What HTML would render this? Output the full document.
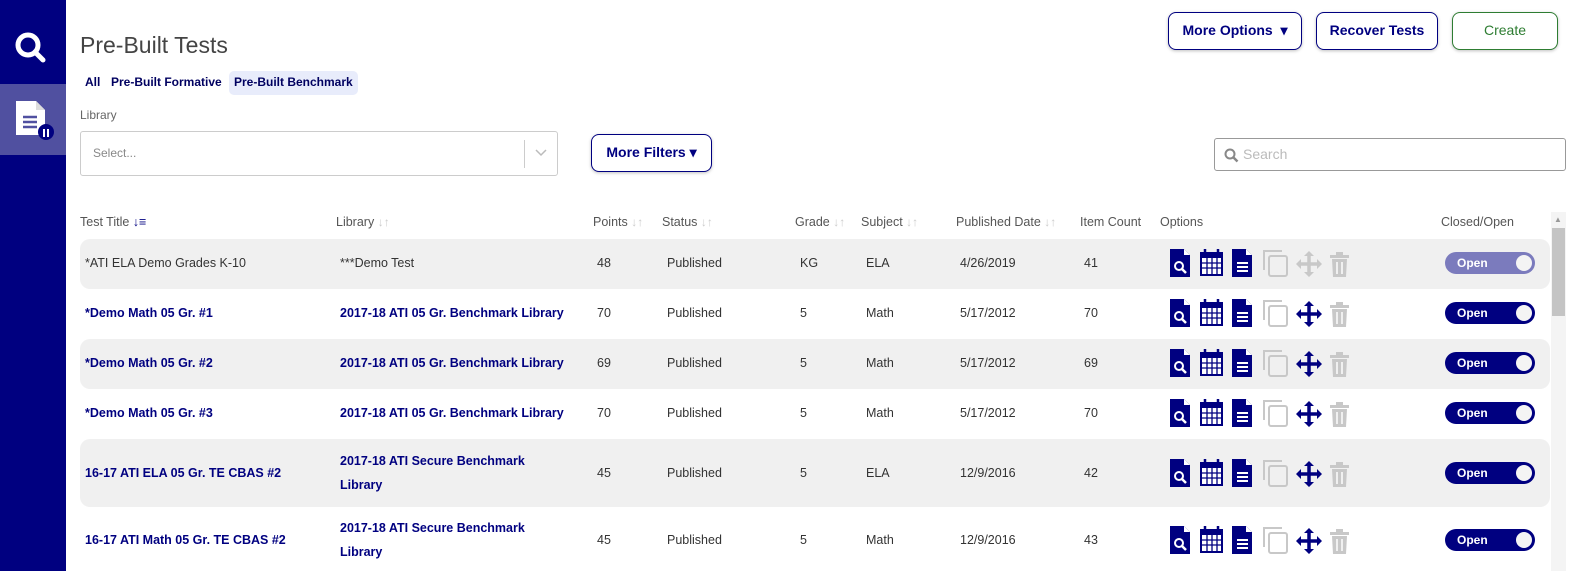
<!DOCTYPE html>
<html><head><meta charset="utf-8"><style>
*{box-sizing:border-box;margin:0;padding:0}
body{width:1583px;height:571px;overflow:hidden;background:#fff;font-family:"Liberation Sans",Arial,sans-serif;position:relative;color:#333}
.side{position:absolute;left:0;top:0;width:66px;height:571px;background:#000080}
.side .act{position:absolute;left:0;top:84px;width:66px;height:71px;background:#5050a0}
.abs{position:absolute}
h1{position:absolute;left:80px;top:32px;font-size:23px;font-weight:normal;color:#444}
.tab{position:absolute;top:71px;height:24px;line-height:22px;font-size:12px;font-weight:bold;color:#000060;padding:0 5px}
.btn{position:absolute;top:12px;height:38px;border:1.5px solid #000080;border-radius:8px;font-size:14px;font-weight:bold;color:#000080;text-align:center;line-height:35px;box-shadow:0 1px 3px rgba(0,0,0,.25);background:#fff}
.row{position:absolute;left:80px;width:1470px;border-radius:10px}
.g{background:#f0f0f0}
.c{position:absolute;font-size:12.5px;color:#333;transform:translateY(-50%)}
.n{color:#000080;font-weight:bold}
.h{position:absolute;top:215px;font-size:12.5px;color:#555}
.h i{color:#ccc;font-style:normal;font-size:12px}
.tg{position:absolute;left:1445px;width:90px;height:22px;border-radius:11px;background:#000080;color:#fff;font-size:12px;font-weight:bold;line-height:22px;padding-left:12px;transform:translateY(-50%)}
.tg:after{content:"";position:absolute;right:3px;top:3px;width:16px;height:16px;border-radius:50%;background:#f4f4f4}
.ic{position:absolute;left:1170px;transform:translateY(-50%)}
</style></head><body>
<div class="side"><div class="act"></div>
<svg class="abs" style="left:13px;top:30px" width="36" height="36" viewBox="0 0 36 36"><circle cx="15" cy="15" r="10" fill="none" stroke="#fff" stroke-width="5"/><path d="M22 22l8 8" stroke="#fff" stroke-width="5" stroke-linecap="round"/></svg>
<svg class="abs" style="left:15px;top:100px" width="40" height="42" viewBox="0 0 40 42"><path d="M1 1h20l9 9v25H1z" fill="#fff"/><path d="M21 1v9h9" fill="#ddd"/><path d="M8 17h14M8 22h14M8 27h14" stroke="#5050a0" stroke-width="2.5"/><circle cx="31" cy="32" r="8" fill="#000080"/><path d="M29 29v8M33 29v8" stroke="#fff" stroke-width="2"/></svg>
</div>
<h1>Pre-Built Tests</h1>
<div class="tab" style="left:80px">All</div>
<div class="tab" style="left:106px">Pre-Built Formative</div>
<div class="tab" style="left:229px;background:#e8ecfb;border-radius:5px">Pre-Built Benchmark</div>
<div class="abs" style="left:80px;top:108px;font-size:12px;color:#666">Library</div>
<div class="abs" style="left:80px;top:131px;width:478px;height:45px;border:1px solid #ccc;border-radius:3px"><span class="abs" style="left:12px;top:14px;font-size:12px;color:#888">Select...</span><span class="abs" style="left:443px;top:8px;width:1px;height:28px;background:#ccc"></span><svg class="abs" style="left:453px;top:16px" width="14" height="10"><path d="M2 2l5 5 5-5" fill="none" stroke="#bbb" stroke-width="1.5"/></svg></div>
<div class="btn" style="left:591px;top:134px;width:121px">More Filters ▾</div>
<div class="abs" style="left:1214px;top:138px;width:352px;height:33px;border:1px solid #999;border-radius:3px"><svg class="abs" style="left:9px;top:9px" width="15" height="15"><circle cx="6" cy="6" r="4.5" fill="none" stroke="#888" stroke-width="2"/><path d="M9.5 9.5l4 4" stroke="#888" stroke-width="2.5"/></svg><span class="abs" style="left:28px;top:7px;font-size:14px;color:#bbb">Search</span></div>
<div class="btn" style="left:1168px;width:134px">More Options &nbsp;▾</div>
<div class="btn" style="left:1316px;width:122px">Recover Tests</div>
<div class="btn" style="left:1452px;width:106px;border-color:#2e7d32;color:#2e7d32;font-weight:normal">Create</div>
<div class="h" style="left:80px">Test Title <b style="color:#000080">↓≡</b></div>
<div class="h" style="left:336px">Library <i>↓↑</i></div>
<div class="h" style="left:593px">Points <i>↓↑</i></div>
<div class="h" style="left:662px">Status <i>↓↑</i></div>
<div class="h" style="left:795px">Grade <i>↓↑</i></div>
<div class="h" style="left:861px">Subject <i>↓↑</i></div>
<div class="h" style="left:956px">Published Date <i>↓↑</i></div>
<div class="h" style="left:1080px">Item Count</div>
<div class="h" style="left:1160px">Options</div>
<div class="h" style="left:1441px">Closed/Open</div>
<div class="abs" style="left:1551px;top:212px;width:15px;height:359px;background:#f4f4f4"><div class="abs" style="left:1px;top:16px;width:13px;height:88px;background:#c4c4c4"></div><div class="abs" style="left:3px;top:3px;font-size:8px;color:#999">▲</div></div>
<div class="row g" style="top:239px;height:50px"></div>
<div class="row g" style="top:339px;height:50px"></div>
<div class="row g" style="top:439px;height:68px"></div>
<svg width="0" height="0" style="position:absolute"><defs>
<g id="ico">
<path d="M0 0h14l6 6v22H0z" fill="#000080"/><path d="M14 0v6h6" fill="#fff"/><circle cx="9" cy="17" r="4" fill="none" stroke="#fff" stroke-width="2"/><path d="M12 20l4 4" stroke="#fff" stroke-width="2.5"/>
<g transform="translate(30,0)"><rect x="0" y="3" width="23" height="24" fill="#000080"/><rect x="2" y="9" width="19" height="16" fill="#fff"/><path d="M7 9v16M12 9v16M17 9v16M2 14h19M2 19h19" stroke="#000080" stroke-width="1.3"/><path d="M5 0v6M18 0v6" stroke="#000080" stroke-width="2.5"/></g>
<g transform="translate(62,0)"><path d="M0 0h14l6 6v22H0z" fill="#000080"/><path d="M14 0v6h6" fill="#fff"/><path d="M5 14h11M5 18h11M5 22h11" stroke="#fff" stroke-width="2"/></g>
<g transform="translate(93,1)" fill="none" stroke="#c8c8c8" stroke-width="2"><path d="M1 20V1h18"/><rect x="6" y="6" width="18" height="20" rx="2"/></g>
<g transform="translate(139,15)" fill="currentColor"><path d="M0 -9V9M-9 0H9" stroke="currentColor" stroke-width="3.5"/><path d="M-5 -8L0 -13L5 -8zM-5 8L0 13L5 8zM-8 -5L-13 0L-8 5zM8 -5L13 0L8 5z"/></g>
<g transform="translate(160,3)" fill="#c8c8c8"><rect x="0" y="3" width="19" height="3"/><rect x="6" y="0" width="7" height="3"/><path d="M2 7h15l-1 18H3z"/><path d="M7 10v12M12 10v12" stroke="#f0f0f0" stroke-width="2"/></g>
</g></defs></svg>
<div class="c" style="left:85px;top:263px">*ATI ELA Demo Grades K-10</div><div class="c" style="left:340px;top:263px">***Demo Test</div>
<div class="c" style="left:597px;top:263px">48</div><div class="c" style="left:667px;top:263px">Published</div><div class="c" style="left:800px;top:263px">KG</div><div class="c" style="left:866px;top:263px">ELA</div><div class="c" style="left:960px;top:263px">4/26/2019</div><div class="c" style="left:1084px;top:263px">41</div>
<svg class="ic" style="top:263px;color:#c8c8c8" width="190" height="36" viewBox="0 -4 190 36"><use href="#ico"/></svg>
<div class="tg" style="top:263px;background:#7b7bbd">Open</div>
<div class="c n" style="left:85px;top:313px">*Demo Math 05 Gr. #1</div><div class="c n" style="left:340px;top:313px">2017-18 ATI 05 Gr. Benchmark Library</div>
<div class="c" style="left:597px;top:313px">70</div><div class="c" style="left:667px;top:313px">Published</div><div class="c" style="left:800px;top:313px">5</div><div class="c" style="left:866px;top:313px">Math</div><div class="c" style="left:960px;top:313px">5/17/2012</div><div class="c" style="left:1084px;top:313px">70</div>
<svg class="ic" style="top:313px;color:#000080" width="190" height="36" viewBox="0 -4 190 36"><use href="#ico"/></svg>
<div class="tg" style="top:313px">Open</div>
<div class="c n" style="left:85px;top:363px">*Demo Math 05 Gr. #2</div><div class="c n" style="left:340px;top:363px">2017-18 ATI 05 Gr. Benchmark Library</div>
<div class="c" style="left:597px;top:363px">69</div><div class="c" style="left:667px;top:363px">Published</div><div class="c" style="left:800px;top:363px">5</div><div class="c" style="left:866px;top:363px">Math</div><div class="c" style="left:960px;top:363px">5/17/2012</div><div class="c" style="left:1084px;top:363px">69</div>
<svg class="ic" style="top:363px;color:#000080" width="190" height="36" viewBox="0 -4 190 36"><use href="#ico"/></svg>
<div class="tg" style="top:363px">Open</div>
<div class="c n" style="left:85px;top:413px">*Demo Math 05 Gr. #3</div><div class="c n" style="left:340px;top:413px">2017-18 ATI 05 Gr. Benchmark Library</div>
<div class="c" style="left:597px;top:413px">70</div><div class="c" style="left:667px;top:413px">Published</div><div class="c" style="left:800px;top:413px">5</div><div class="c" style="left:866px;top:413px">Math</div><div class="c" style="left:960px;top:413px">5/17/2012</div><div class="c" style="left:1084px;top:413px">70</div>
<svg class="ic" style="top:413px;color:#000080" width="190" height="36" viewBox="0 -4 190 36"><use href="#ico"/></svg>
<div class="tg" style="top:413px">Open</div>
<div class="c n" style="left:85px;top:473px">16-17 ATI ELA 05 Gr. TE CBAS #2</div><div class="c n" style="left:340px;top:473px;line-height:24px">2017-18 ATI Secure Benchmark<br>Library</div>
<div class="c" style="left:597px;top:473px">45</div><div class="c" style="left:667px;top:473px">Published</div><div class="c" style="left:800px;top:473px">5</div><div class="c" style="left:866px;top:473px">ELA</div><div class="c" style="left:960px;top:473px">12/9/2016</div><div class="c" style="left:1084px;top:473px">42</div>
<svg class="ic" style="top:473px;color:#000080" width="190" height="36" viewBox="0 -4 190 36"><use href="#ico"/></svg>
<div class="tg" style="top:473px">Open</div>
<div class="c n" style="left:85px;top:540px">16-17 ATI Math 05 Gr. TE CBAS #2</div><div class="c n" style="left:340px;top:540px;line-height:24px">2017-18 ATI Secure Benchmark<br>Library</div>
<div class="c" style="left:597px;top:540px">45</div><div class="c" style="left:667px;top:540px">Published</div><div class="c" style="left:800px;top:540px">5</div><div class="c" style="left:866px;top:540px">Math</div><div class="c" style="left:960px;top:540px">12/9/2016</div><div class="c" style="left:1084px;top:540px">43</div>
<svg class="ic" style="top:540px;color:#000080" width="190" height="36" viewBox="0 -4 190 36"><use href="#ico"/></svg>
<div class="tg" style="top:540px">Open</div>
</body></html>
